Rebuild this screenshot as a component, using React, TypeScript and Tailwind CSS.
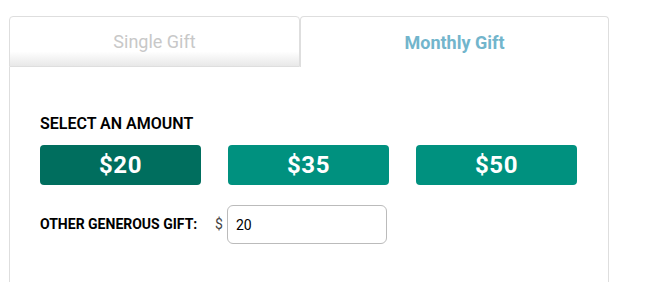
import React, { useState } from 'react';

const amounts = [20, 35, 50];

const App = () => {
  const [selected, setSelected] = useState(20);
  const [other, setOther] = useState('20');

  return (
    <div className="min-h-[282px] bg-white font-['Roboto',sans-serif]">
      <div className="ml-[9px] w-[600px] pt-[16px]">
        {/* Tabs */}
        <div className="flex h-[51px]">
          <button className="w-[291px] rounded-t border border-[#dedede] bg-gradient-to-b from-white from-70% to-[#e8e8e8] text-[18px] text-[#c8c8c8]">
            Single Gift
          </button>
          <button className="flex-1 rounded-t border border-b-0 border-[#dedede] bg-white text-[18px] font-bold text-[#72b5cc]">
            Monthly Gift
          </button>
        </div>

        {/* Panel */}
        <div className="border-x border-[#dedede] px-[30px] pt-[47px] pb-[40px]">
          <h2 className="mb-[11px] text-[16px] leading-5 font-semibold text-black">SELECT AN AMOUNT</h2>
          <div className="grid grid-cols-[161px_161px_161px] gap-[27px]">
            {amounts.map((a) => (
              <button
                key={a}
                onClick={() => {
                  setSelected(a);
                  setOther(String(a));
                }}
                className={
                  a === selected
                    ? 'h-10 rounded bg-[#006e5e] text-[24px] font-bold tracking-[0.5px] text-white'
                    : 'h-10 rounded bg-[#00917f] text-[24px] font-bold tracking-[0.5px] text-white'
                }
              >
                ${a}
              </button>
            ))}
          </div>

          <div className="mt-5 flex items-center">
            <label className="w-[175px] text-[14px] font-bold text-black">OTHER GENEROUS GIFT:</label>
            <span className="mr-1 text-[14px] text-[#444]">$</span>
            <input
              value={other}
              onChange={(e) => setOther(e.target.value)}
              className="h-[39px] w-[160px] rounded-md border border-[#bbb] px-2 text-[14px] text-black outline-none"
            />
          </div>
        </div>
      </div>
    </div>
  );
};

export default App;
